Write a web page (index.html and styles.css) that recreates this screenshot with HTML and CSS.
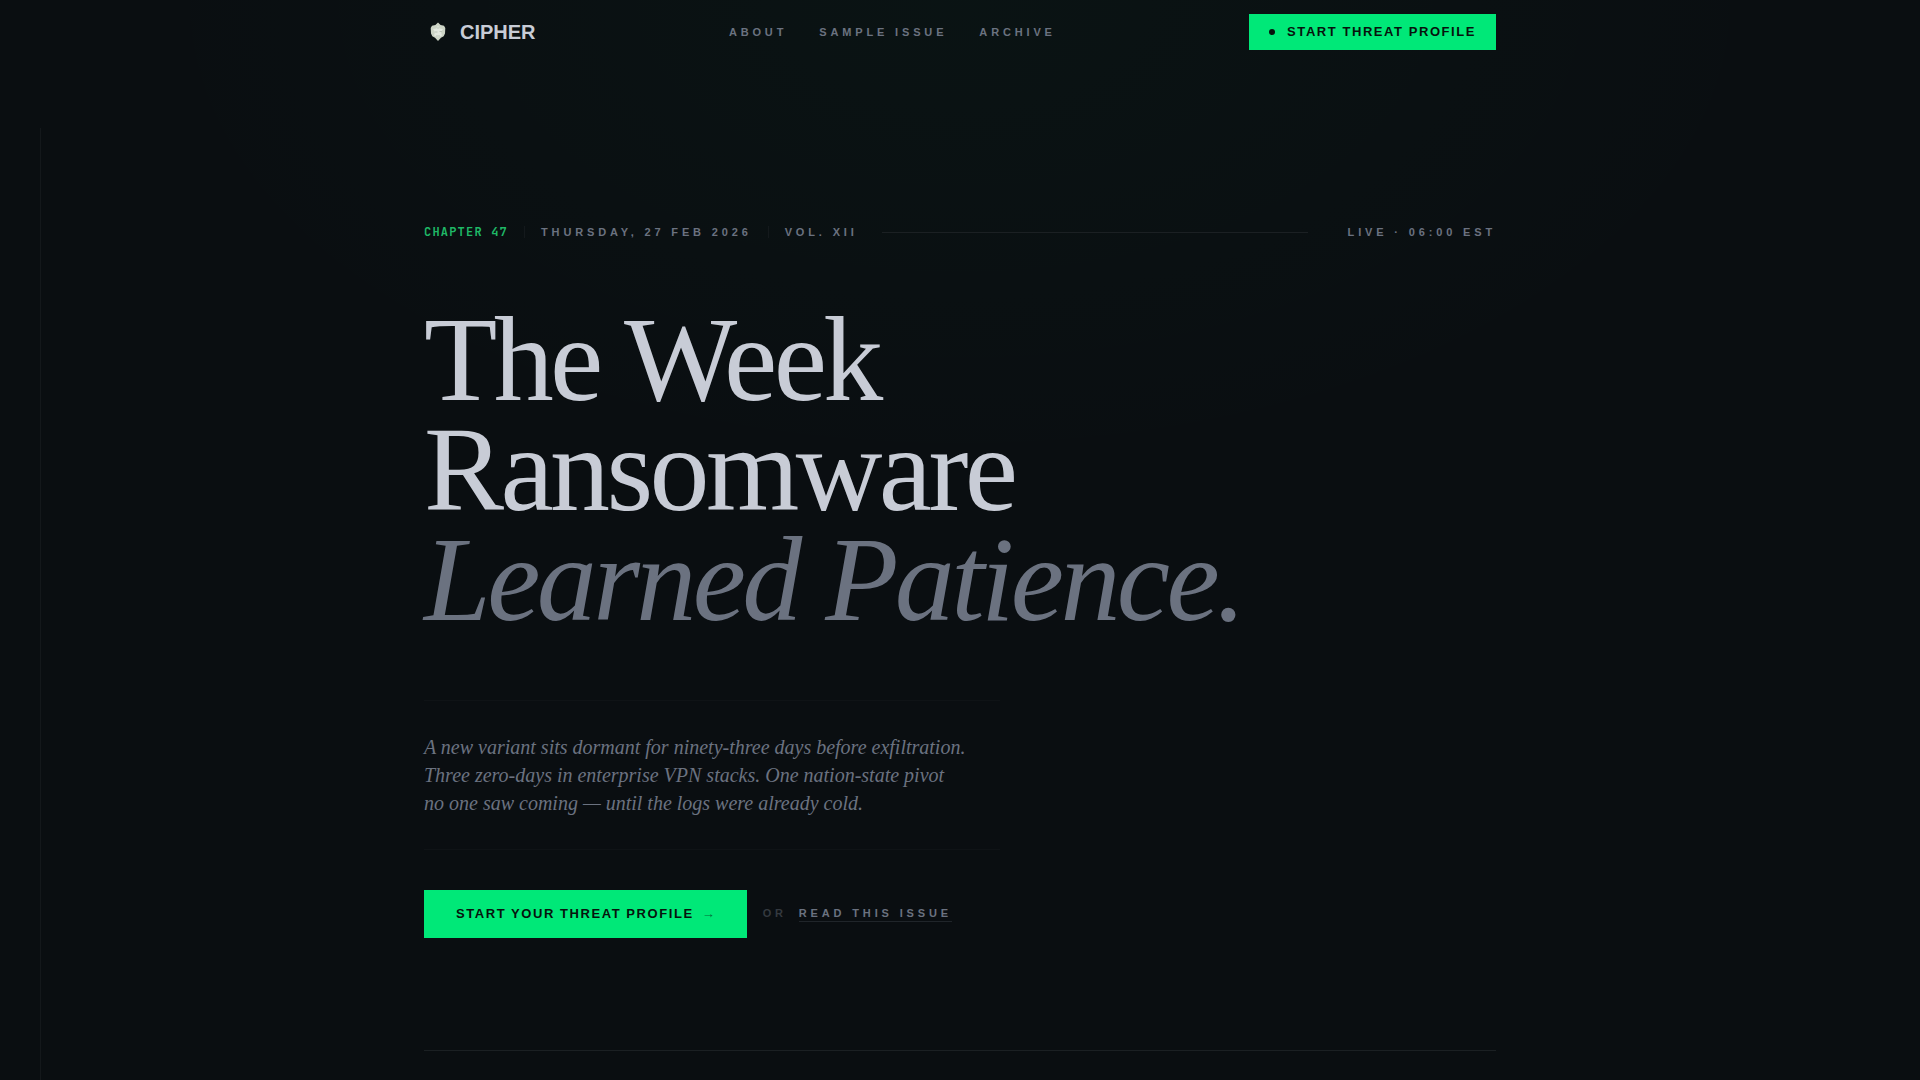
FILE: index.html
```html
<!DOCTYPE html>
<html lang="en">
<head>
<meta charset="utf-8">
<meta name="viewport" content="width=device-width, initial-scale=1">
<title>Cipher — Chapter 47</title>
<link rel="stylesheet" href="styles.css">
</head>
<body>
<div class="page">
  <header class="nav container">
    <a class="brand" href="#">
      <svg class="brand-mark" viewBox="0 0 28 28" aria-hidden="true">
        <path d="M14 4.500l2.600 2.500 3.400.8 1.300 2.200-.3 5.500-1.300 2.800-2.700 1.500L14 23l-3-3.200-2.700-1.500L7 15.500 6.700 10 8 7.800l3.400-.8z" fill="#cdd4c6"/>
        <path d="M14 7.500l1.500 3 3.500.5-2 3 1 3.500-4 2-4-2 1-3.500-2-3 3.500-.5z" fill="#e3e8df"/>
        <path d="M11 14h2.500M15.500 13.500H18M14 9v2M12 18h4" fill="none" stroke="#bcc5b8" stroke-width="1"/>
      </svg>
      <span>CIPHER</span>
    </a>
    <nav class="links" aria-label="Main">
      <a class="label" href="#">ABOUT</a>
      <a class="label" href="#">SAMPLE ISSUE</a>
      <a class="label" href="#">ARCHIVE</a>
    </nav>
    <button class="button button-small" type="button"><span class="dot"></span>START THREAT PROFILE</button>
  </header>

  <main class="hero container">
    <div class="meta">
      <span class="chapter">CHAPTER 47</span>
      <span class="divider"></span>
      <span class="label">THURSDAY, 27 FEB 2026</span>
      <span class="divider"></span>
      <span class="label">VOL. XII</span>
      <span class="line"></span>
      <span class="label">LIVE · 06:00 EST</span>
    </div>
    <h1 class="title">The Week<br>Ransomware<br><em>Learned Patience.</em></h1>
    <p class="deck">A new variant sits dormant for ninety-three days before exfiltration. Three zero-days in enterprise VPN stacks. One nation-state pivot no one saw coming — until the logs were already cold.</p>
    <div class="actions">
      <button class="button button-large" type="button">START YOUR THREAT PROFILE<span class="arrow">→</span></button>
      <div class="alternative">
        <span class="label or">OR</span>
        <a class="label read" href="#">READ THIS ISSUE</a>
      </div>
    </div>
    <hr class="rule">
  </main>
</div>
</body>
</html>
```
FILE: styles.css
```css
:root {
  --bg: #0a0e11;
  --text: #c8ccd6;
  --muted: #6b7280;
  --green: #00e878;
  --sans: "Liberation Sans", Arial, sans-serif;
  --serif: "Liberation Serif", "Times New Roman", serif;
  --mono: "JetBrains Mono", "Liberation Mono", monospace;
}

* { box-sizing: border-box; }

body {
  margin: 0;
  background: var(--bg);
  color: var(--text);
  font-family: var(--sans);
}

a { color: inherit; text-decoration: none; }

.page {
  position: relative;
  min-height: 100vh;
  background: radial-gradient(ellipse 44% 45% at 50% 0, rgba(0, 232, 120, 0.025), transparent);
}

/* vertical hairline in the left margin */
.page::before {
  content: "";
  position: absolute;
  top: 128px;
  bottom: 0;
  left: 40px;
  width: 1px;
  background: #14181b;
}

.container {
  width: 100%;
  max-width: 1200px;
  margin: 0 auto;
  padding: 0 64px;
}

.nav {
  display: flex;
  align-items: center;
  justify-content: space-between;
  min-height: 64px;
}

.brand {
  display: flex;
  align-items: center;
  gap: 8px;
  font-size: 20px;
  font-weight: 700;
  line-height: 24px;
}

.brand-mark { width: 28px; height: 28px; }

.links { display: flex; gap: 32px; }

.label {
  color: var(--muted);
  font-size: 11px;
  font-weight: 700;
  line-height: 16px;
  letter-spacing: 0.35em;
  white-space: nowrap;
}

.button {
  display: inline-flex;
  align-items: center;
  border: 0;
  background: var(--green);
  color: #07130d;
  font-family: var(--sans);
  font-size: 13px;
  font-weight: 700;
  line-height: 16px;
  letter-spacing: 0.12em;
  white-space: nowrap;
  cursor: pointer;
}

.button-small { gap: 12px; padding: 10px 20px; }
.button-large { gap: 8px; padding: 16px 32px; }

.dot {
  width: 6px;
  height: 6px;
  border-radius: 50%;
  background: currentColor;
}

.arrow { letter-spacing: 0; opacity: 0.6; }

.hero { padding-top: 160px; }

.meta { display: flex; align-items: center; gap: 16px; }

.chapter {
  color: #1fb866;
  font-family: var(--mono);
  font-size: 12px;
  font-weight: 600;
  line-height: 16px;
  letter-spacing: 0.1em;
}

.divider { width: 1px; height: 12px; background: #14191c; }

.line {
  flex: 1;
  height: 1px;
  margin: 0 24px 0 8px;
  background: #1b2023;
}

.title {
  margin: 65px 0;
  font-family: var(--serif);
  font-size: 120px;
  font-weight: 400;
  line-height: 110px;
  letter-spacing: -0.03em;
}

.title em { color: var(--muted); }

.deck {
  max-width: 576px;
  margin: 0 0 40px;
  padding: 32px 32px 32px 0;
  border: solid #0f1316;
  border-width: 1px 0;
  color: var(--muted);
  font-family: var(--serif);
  font-size: 20px;
  font-style: italic;
  line-height: 28px;
}

.actions { display: flex; align-items: center; gap: 16px; }

.alternative {
  display: flex;
  align-items: flex-start;
  gap: 12px;
  padding-bottom: 2px;
}

.or { color: #34393f; }

.read { border-bottom: 1px solid #20252a; }

.rule {
  height: 1px;
  margin: 112px 0 0;
  border: 0;
  background: #1b2023;
}
```
